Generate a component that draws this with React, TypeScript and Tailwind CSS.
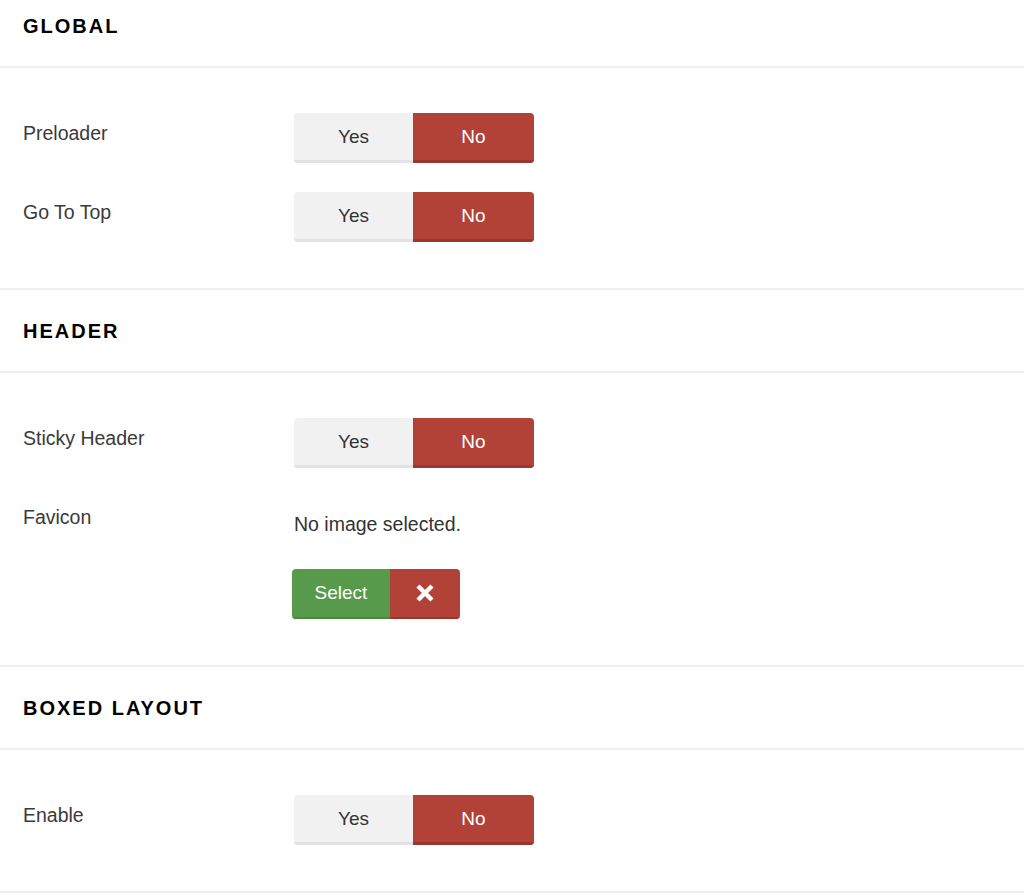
import type { ReactNode } from "react";

function Toggle() {
  return (
    <div className="flex w-[240px] h-[50px] rounded-[4px] overflow-hidden text-[19px]">
      <button className="w-[119px] bg-[#f1f1f1] border-b-[3px] border-[#e2e2e2] text-[#333] pt-[2px]">
        Yes
      </button>
      <button className="flex-1 bg-[#b24237] border-b-[3px] border-[#9a372e] text-white pt-[2px]">
        No
      </button>
    </div>
  );
}

function Row({ label, children }: { label: string; children: ReactNode }) {
  return (
    <div className="grid grid-cols-[271px_1fr]">
      <div className="pt-[8px] leading-[24px] text-[19.5px] text-[#3a3a3a]">{label}</div>
      <div>{children}</div>
    </div>
  );
}

function Section({
  title,
  first,
  children,
}: {
  title: string;
  first?: boolean;
  children: ReactNode;
}) {
  return (
    <section>
      <div
        className={`px-[23px] border-b-2 border-[#f0f0f0] ${first ? "pt-[14px] pb-[28px]" : "pt-[29px] pb-[28px]"}`}
      >
        <h2 className="leading-[24px] text-[20px] font-bold tracking-[2px] text-black">{title}</h2>
      </div>
      <div className="px-[23px] pt-[45px] pb-[46px] border-b-2 border-[#f0f0f0] flex flex-col gap-[29px]">
        {children}
      </div>
    </section>
  );
}

export default function App() {
  return (
    <div className="min-h-screen bg-white" style={{ fontFamily: '"Liberation Sans", Arial, sans-serif' }}>
      <Section title="GLOBAL" first>
        <Row label="Preloader">
          <Toggle />
        </Row>
        <Row label="Go To Top">
          <Toggle />
        </Row>
      </Section>

      <Section title="HEADER">
        <Row label="Sticky Header">
          <Toggle />
        </Row>
        <Row label="Favicon">
          <p className="pt-[15px] leading-[24px] text-[19.5px] text-[#333]">No image selected.</p>
          <div className="mt-[33px] -ml-[2px] flex w-[168px] h-[50px] rounded-[4px] overflow-hidden">
            <button className="w-[98px] bg-[#579a4b] border-b-[2px] border-[#4c8a41] text-white text-[19px]">
              Select
            </button>
            <button className="flex-1 bg-[#b24237] border-b-[2px] border-[#9a372e] flex items-center justify-center">
              <svg width="20" height="20" viewBox="0 0 20 20">
                <path d="M3 3 L17 17 M17 3 L3 17" stroke="white" strokeWidth="4.5" strokeLinecap="butt" />
              </svg>
            </button>
          </div>
        </Row>
      </Section>

      <Section title="BOXED LAYOUT">
        <Row label="Enable">
          <Toggle />
        </Row>
      </Section>
    </div>
  );
}
